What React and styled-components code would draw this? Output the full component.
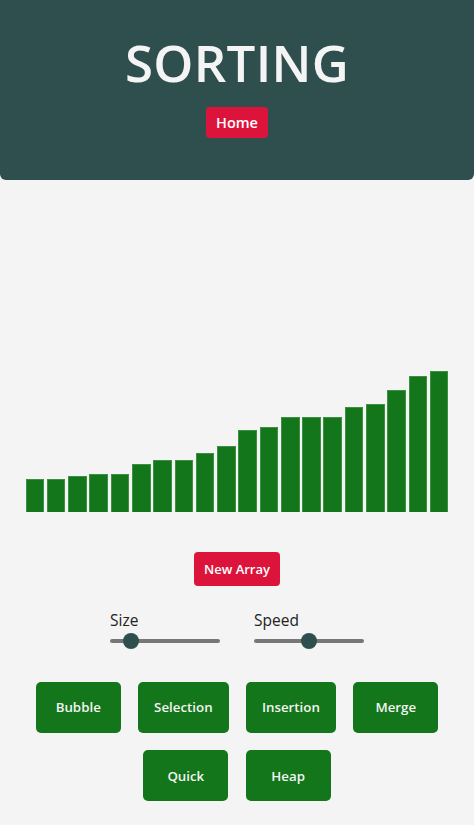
import React from "react";
import styled, { createGlobalStyle } from "styled-components";

const Global = createGlobalStyle`
  html, body { margin: 0; padding: 0; background: #f4f4f4; }
  body { font-family: "Open Sans", "Noto Sans", sans-serif; }
  * { box-sizing: border-box; }
`;

const Page = styled.div`
  width: 474px;
  min-height: 825px;
  background: #f4f4f4;
  display: flex;
  flex-direction: column;
  align-items: center;
`;

const Header = styled.header`
  width: 100%;
  height: 180px;
  background: #2f4f4f;
  border-radius: 0 0 6px 6px;
  display: flex;
  flex-direction: column;
  align-items: center;
  padding-top: 30px;
`;

const Title = styled.h1`
  margin: 0;
  color: #f4f4f4;
  font-size: 51px;
  font-weight: 600;
  line-height: 64px;
  letter-spacing: 0.3px;
`;

const RedButton = styled.button`
  border: none;
  background: #dc143c;
  color: #fff;
  font-family: inherit;
  font-weight: 600;
  font-size: ${(p) => p.$size || 14}px;
  border-radius: 4px;
  height: ${(p) => p.$h}px;
  padding: 0 ${(p) => p.$px}px;
  margin-top: ${(p) => p.$mt}px;
  cursor: pointer;
`;

const Chart = styled.div`
  margin-top: 20px;
  height: 312px;
  display: flex;
  align-items: flex-end;
  justify-content: center;
  width: 100%;
`;

const Bar = styled.div`
  width: 18.6px;
  margin: 0 1.35px;
  background: #13761a;
  border: 1px solid #3e8f44;
  border-bottom: none;
`;

const Sliders = styled.div`
  margin-top: 24px;
  display: flex;
  gap: 34px;
`;

const SliderGroup = styled.label`
  display: flex;
  flex-direction: column;
  width: 110px;
  color: #222;
  font-size: 15.5px;
  line-height: 20px;
`;

const Range = styled.input`
  -webkit-appearance: none;
  appearance: none;
  width: 110px;
  height: 16px;
  margin: 3px 0 0 0;
  background: transparent;
  &::-webkit-slider-runnable-track {
    height: 4px;
    background: #777;
    border-radius: 2px;
  }
  &::-webkit-slider-thumb {
    -webkit-appearance: none;
    width: 16px;
    height: 16px;
    border-radius: 50%;
    background: #2f4f4f;
    margin-top: -6px;
  }
`;

const Algos = styled.div`
  margin-top: 24px;
  width: 100%;
  display: flex;
  flex-wrap: wrap;
  justify-content: center;
  padding: 0 10px;
`;

const AlgoButton = styled.button`
  min-width: 85px;
  height: 51px;
  margin: 8.7px;
  padding: 0 16px;
  border: none;
  border-radius: 5px;
  background: #13761a;
  color: #f4f4f4;
  font-family: inherit;
  font-weight: 600;
  font-size: 13.3px;
  cursor: pointer;
`;

const heights = [33, 33, 36, 38, 38, 48, 52, 52, 59, 66, 82, 85, 95, 95, 95, 105, 108, 122, 136, 141];
const algos = ["Bubble", "Selection", "Insertion", "Merge", "Quick", "Heap"];

export default function App() {
  return (
    <Page>
      <Global />
      <Header>
        <Title>SORTING</Title>
        <RedButton $h={31} $px={10} $mt={13} $size={14.5}>Home</RedButton>
      </Header>
      <Chart>
        {heights.map((h, i) => (
          <Bar key={i} style={{ height: h }} />
        ))}
      </Chart>
      <RedButton $h={34} $px={10} $mt={40} $size={13}>New Array</RedButton>
      <Sliders>
        <SliderGroup>
          Size
          <Range type="range" min="0" max="100" defaultValue="14" />
        </SliderGroup>
        <SliderGroup>
          Speed
          <Range type="range" min="0" max="100" defaultValue="50" />
        </SliderGroup>
      </Sliders>
      <Algos>
        {algos.map((a) => (
          <AlgoButton key={a}>{a}</AlgoButton>
        ))}
      </Algos>
    </Page>
  );
}
